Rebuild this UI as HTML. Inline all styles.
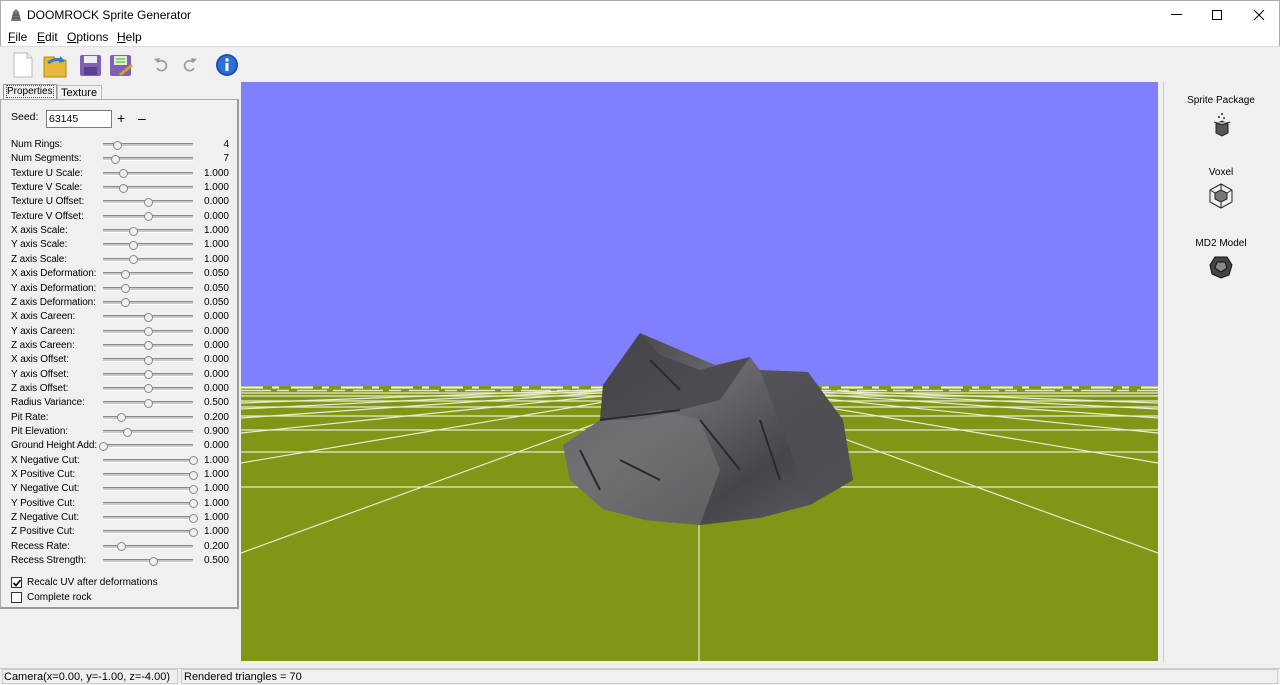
<!DOCTYPE html>
<html><head><meta charset="utf-8"><style>
*{margin:0;padding:0;box-sizing:border-box}
body{width:1280px;height:685px;background:#f0f0f0;font-family:"Liberation Sans",sans-serif;font-size:11px;color:#000;position:relative;overflow:hidden}
.abs{position:absolute}
.title{left:0;top:0;width:1280px;height:30px;background:#fff;border:1px solid #aaa;border-bottom:none}
.menu{left:0;top:30px;width:1280px;height:16px;background:#fff;font-size:12px;border-left:1px solid #aaa;border-right:1px solid #aaa}
.menu span{position:absolute;top:0}
.lbl{position:absolute;left:11px;font-size:10px;letter-spacing:-0.1px}
.val{position:absolute;right:1051px;font-size:10px;text-align:right}
.trk{position:absolute;left:103px;width:90px;height:4px;background:#c8c8c8;border-top:1px solid #8a8a8a;border-bottom:1px solid #fff}
.th{position:absolute;width:9px;height:9px;border-radius:50%;background:#f0f0f0;border:1px solid #888}
</style></head><body>
<div class="abs title">
 <svg class="abs" style="left:8px;top:7px" width="14" height="14"><path d="M2 13 L4 4 L7 1 L10 4 L12 13Z" fill="#777"/><path d="M4 7h6M3 10h8" stroke="#444"/></svg>
 <div class="abs" style="left:26px;top:7px;font-size:12px">DOOMROCK Sprite Generator</div>
 <div class="abs" style="left:1170px;top:13px;width:11px;height:1px;background:#000"></div>
 <div class="abs" style="left:1211px;top:9px;width:10px;height:10px;border:1px solid #000"></div>
 <svg class="abs" style="left:1252px;top:8px" width="12" height="12"><path d="M1 1L11 11M11 1L1 11" stroke="#000"/></svg>
</div>
<div class="abs menu">
 <span style="left:7px"><u>F</u>ile</span><span style="left:36px"><u>E</u>dit</span><span style="left:66px"><u>O</u>ptions</span><span style="left:116px"><u>H</u>elp</span>
</div>
<div class="abs" style="left:0;top:46px;width:1280px;height:1px;background:#ddd"></div>
<svg class="abs" style="left:10px;top:51px" width="230" height="28">
 <path d="M4 2h13l5 5v19H4z" fill="#fff" stroke="#bbb"/><path d="M17 2v5h5" fill="#eee" stroke="#bbb"/>
 <path d="M34 6h10l2 3h10v17H34z" fill="#e8b838" stroke="#b8860b"/><path d="M38 12 q8 -6 16 -2" stroke="#2a7fd4" stroke-width="3" fill="none"/><path d="M50 5l5 5-6 2z" fill="#2a7fd4"/>
 <rect x="70" y="4" width="21" height="21" rx="2" fill="#8060b0"/><rect x="74" y="5" width="13" height="7" fill="#eee"/><rect x="74" y="16" width="13" height="8" fill="#5a4090"/>
 <rect x="100" y="4" width="21" height="21" rx="2" fill="#8060b0"/><rect x="104" y="5" width="13" height="9" fill="#d8f0d0"/><path d="M106 8h9M106 11h9" stroke="#4a4"/><path d="M110 24l12-10" stroke="#d8a020" stroke-width="3"/>
 <path d="M148 11 a5 5 0 1 1 -1 6" stroke="#999" stroke-width="1.6" fill="none"/><path d="M144 8l4 4 2-5z" fill="#999"/>
 <path d="M183 11 a5 5 0 1 0 1 6" stroke="#999" stroke-width="1.6" fill="none"/><path d="M187 8l-4 4-2-5z" fill="#999"/>
 <circle cx="217" cy="14" r="11" fill="#1a4fb0"/><circle cx="217" cy="14" r="9" fill="#2d6fd8"/><rect x="215.5" y="12" width="3" height="8" fill="#fff"/><circle cx="217" cy="9" r="1.7" fill="#fff"/>
</svg>
<div class="abs" style="left:3px;top:84px;width:54px;height:15px;border:1px solid #999;border-bottom:none;background:#f0f0f0;font-size:10px;padding:1px 0 0 3px"><span style="outline:1px dotted #555">Properties</span></div>
<div class="abs" style="left:57px;top:85px;width:45px;height:15px;border:1px solid #bbb;border-bottom:none;font-size:11px;padding:1px 0 0 3px">Texture</div>
<div class="abs" style="left:0;top:99px;width:239px;height:510px;border:1px solid #aaa;border-right:2px solid #999;border-bottom:2px solid #999"></div>
<div class="abs" style="left:11px;top:111px;font-size:10.5px">Seed:</div>
<div class="abs" style="left:46px;top:110px;width:66px;height:18px;background:#fff;border:1px solid #7a7a7a;font-size:10.5px;padding:2px 0 0 2px">63145</div>
<div class="abs" style="left:117px;top:110px;font-size:14px">+</div>
<div class="abs" style="left:138px;top:110px;font-size:14px">–</div>
<div id="rows"></div>
<div class="abs" style="left:11px;top:577px;width:11px;height:11px;border:1px solid #333;background:#fff"></div>
<svg class="abs" style="left:12px;top:578px" width="10" height="10"><path d="M1.5 5l2.5 2.5 4.5-5.5" stroke="#000" stroke-width="1.6" fill="none"/></svg>
<div class="abs" style="left:27px;top:577px;font-size:10px">Recalc UV after deformations</div>
<div class="abs" style="left:11px;top:592px;width:11px;height:11px;border:1px solid #333;background:#fff"></div>
<div class="abs" style="left:27px;top:592px;font-size:10px">Complete rock</div>
<svg class="abs" style="left:241px;top:82px" width="917" height="579" viewBox="241 82 917 579">
 <rect x="241" y="82" width="917" height="305" fill="#8080ff"/>
 <rect x="241" y="386" width="917" height="275" fill="#7f9617"/>
 <g stroke="#e8ecd0" stroke-width="1.5">
  <path d="M241 387.5H1158" stroke="#f8f8f0" stroke-dasharray="22 9 7 12" stroke-width="2"/>
  <path d="M241 390.5H1158" stroke="#dfe6c0" stroke-dasharray="30 6 12 8" stroke-width="1.5"/>
  <path d="M241 393H1158M241 396H1158M241 401H1158M241 407H1158M241 416H1158M241 430H1158M241 452H1158M241 487H1158" stroke-width="1.2"/>
  <path d="M699 386V661M699 386L241 553M699 386L1158 553M699 386L241 463M699 386L1158 463M699 386L241 433M699 386L1158 433M699 386L241 418M699 386L1158 418M699 386L241 409M699 386L1158 409M699 386L241 403M699 386L1158 403" stroke-width="1.2"/>
 </g>
 <defs><linearGradient id="rk" x1="0" y1="0" x2="1" y2="1"><stop offset="0" stop-color="#3a3a3e"/><stop offset=".4" stop-color="#6a6a6e"/><stop offset=".7" stop-color="#46464a"/><stop offset="1" stop-color="#606064"/></linearGradient></defs>
 <path d="M640 333L715 365L750 357L760 370L808 372L843 420L853 480L810 505L760 518L700 525L645 520L603 509L570 480L563 445L600 420L603 385Z" fill="url(#rk)"/>
 <path d="M603 385L640 333L660 355L700 370L750 357L720 400L680 410L640 420L600 420Z" fill="#45454a" opacity=".8"/>
 <path d="M563 445L600 420L660 410L700 420L720 470L700 525L645 520L603 509L570 480Z" fill="#76767a" opacity=".6"/>
 <path d="M760 370L808 372L843 420L853 480L810 505L790 450Z" fill="#505054" opacity=".8"/>
 <path d="M600 420l80-10M700 420l40 50M620 460l40 20M760 420l20 60M580 450l20 40M650 360l30 30" stroke="#2a2a2e" stroke-width="2" fill="none"/>
</svg>
<div class="abs" style="left:1163px;top:82px;width:1px;height:580px;background:#ccc"></div>
<div class="abs" style="left:1166px;top:95px;width:110px;text-align:center;font-size:10px">Sprite Package</div>
<svg class="abs" style="left:1208px;top:110px" width="26" height="28"><path d="M8 14l6-3 6 3v9l-6 3-6-3z" fill="#555" stroke="#222"/><path d="M6 12l8 3 8-3" stroke="#222" fill="#aaa"/><circle cx="14" cy="4" r="1" fill="#333"/><circle cx="11" cy="7" r="1" fill="#333"/><circle cx="16" cy="8" r="1" fill="#333"/></svg>
<div class="abs" style="left:1166px;top:167px;width:110px;text-align:center;font-size:10px">Voxel</div>
<svg class="abs" style="left:1208px;top:182px" width="26" height="28"><path d="M13 2l11 6v12l-11 6-11-6V8z" fill="none" stroke="#222"/><path d="M13 8l6 3v6l-6 3-6-3v-6z" fill="#777" stroke="#222"/><path d="M2 8l5 3M24 8l-5 3M13 26v-6M13 2v6" stroke="#222"/></svg>
<div class="abs" style="left:1166px;top:238px;width:110px;text-align:center;font-size:10px">MD2 Model</div>
<svg class="abs" style="left:1208px;top:254px" width="26" height="26"><path d="M7 3h12l5 8-3 10-8 3-9-4-2-9z" fill="#444" stroke="#111"/><path d="M9 8h8l2 6-6 4-6-4z" fill="#888" stroke="#111"/></svg>
<div class="abs" style="left:0;top:668px;width:1280px;height:17px;background:#f0f0f0;border-top:1px solid #ccc"></div>
<div class="abs" style="left:2px;top:669px;width:176px;height:15px;border:1px solid #ccc;font-size:11px;padding:1px 0 0 1px">Camera(x=0.00, y=-1.00, z=-4.00)</div>
<div class="abs" style="left:181px;top:669px;width:1097px;height:15px;border:1px solid #ccc;font-size:11px;padding:1px 0 0 2px">Rendered triangles = 70</div>
<script>
var R=[["Num Rings:",117,"4"],["Num Segments:",115,"7"],["Texture U Scale:",123,"1.000"],["Texture V Scale:",123,"1.000"],["Texture U Offset:",148,"0.000"],["Texture V Offset:",148,"0.000"],["X axis Scale:",133,"1.000"],["Y axis Scale:",133,"1.000"],["Z axis Scale:",133,"1.000"],["X axis Deformation:",125,"0.050"],["Y axis Deformation:",125,"0.050"],["Z axis Deformation:",125,"0.050"],["X axis Careen:",148,"0.000"],["Y axis Careen:",148,"0.000"],["Z axis Careen:",148,"0.000"],["X axis Offset:",148,"0.000"],["Y axis Offset:",148,"0.000"],["Z axis Offset:",148,"0.000"],["Radius Variance:",148,"0.500"],["Pit Rate:",121,"0.200"],["Pit Elevation:",127,"0.900"],["Ground Height Add:",103,"0.000"],["X Negative Cut:",193,"1.000"],["X Positive Cut:",193,"1.000"],["Y Negative Cut:",193,"1.000"],["Y Positive Cut:",193,"1.000"],["Z Negative Cut:",193,"1.000"],["Z Positive Cut:",193,"1.000"],["Recess Rate:",121,"0.200"],["Recess Strength:",153,"0.500"]];
var h="";R.forEach(function(r,i){var y=145+i*14.35;h+='<div class="lbl" style="top:'+(y-6)+'px">'+r[0]+'</div><div class="trk" style="top:'+(y-2)+'px"></div><div class="th" style="left:'+(r[1]-4.5)+'px;top:'+(y-4.5)+'px"></div><div class="val" style="top:'+(y-6)+'px">'+r[2]+'</div>';});
document.getElementById("rows").innerHTML=h;
</script>
</body></html>
